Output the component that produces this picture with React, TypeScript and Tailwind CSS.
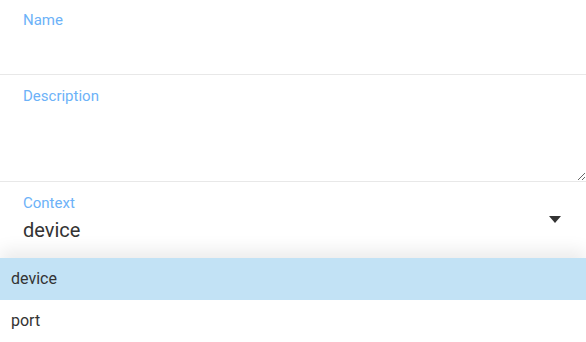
import React from "react"

export default function App() {
  const font = { fontFamily: "Roboto, 'Liberation Sans', sans-serif" }

  return (
    <div className="w-[586px] h-[342px] bg-white overflow-hidden relative" style={font}>
      {/* Name */}
      <div className="h-[75px] px-[23px] pt-[11px] border-b border-[#e8e8e8]">
        <label className="block text-[15px] leading-[18px] text-[#6cb2f8]">Name</label>
        <input className="w-full mt-1 outline-none text-[20px] text-[#333] bg-transparent" />
      </div>

      {/* Description */}
      <div className="h-[107px] pl-[23px] pt-[12px] relative border-b border-[#e8e8e8]">
        <label className="block text-[15px] leading-[18px] text-[#6cb2f8]">Description</label>
        <textarea className="absolute left-0 right-0 top-[32px] bottom-0 resize-y outline-none bg-transparent px-[23px]" />
      </div>

      {/* Context select */}
      <div className="h-[76px] pl-[23px] pr-[25px] pt-[12px] flex items-start justify-between">
        <div>
          <label className="block text-[15px] leading-[18px] text-[#6cb2f8]">Context</label>
          <div className="text-[20px] leading-[26px] mt-[5px] text-[#333]">device</div>
        </div>
        <svg width="12" height="7" viewBox="0 0 12 7" className="mt-[22px]">
          <polygon points="0,0 12,0 6,7" fill="#333" />
        </svg>
      </div>

      {/* Dropdown menu */}
      <div className="absolute left-0 right-0 top-[258px] bg-white shadow-[0_-8px_16px_rgba(0,0,0,0.08)]">
        <div className="h-[42px] bg-[#c2e2f5] flex items-center pl-[11px] text-[16px] text-[#333]">device</div>
        <div className="h-[42px] flex items-center pl-[11px] text-[16px] text-[#333]">port</div>
      </div>
    </div>
  )
}
